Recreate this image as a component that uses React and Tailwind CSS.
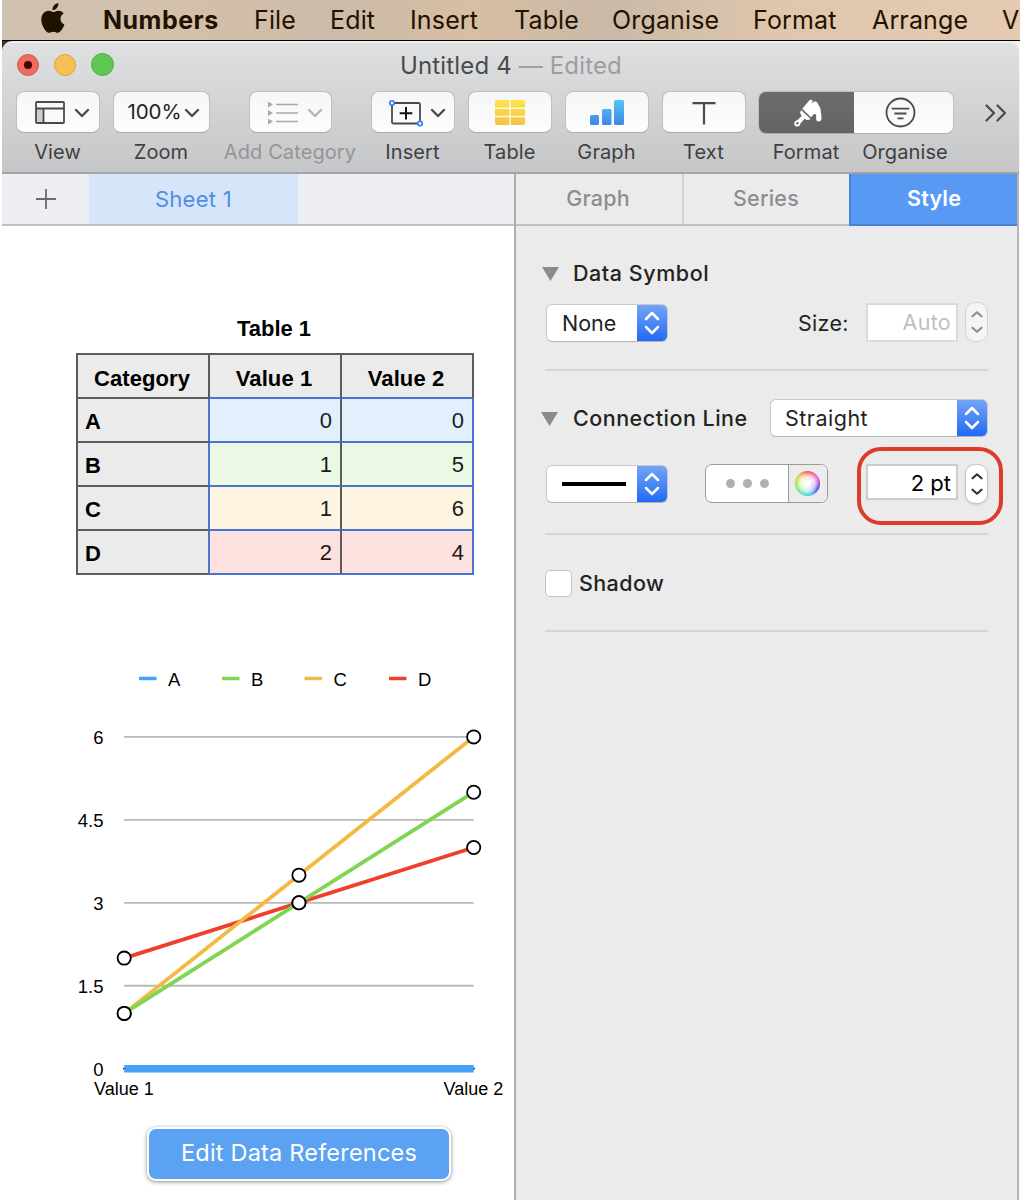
import React from 'react';

const MENUS = [
  { label: 'File',     cls: 'w-[41px] ml-[35px]' },
  { label: 'Edit',     cls: 'w-[45px] ml-[35px]' },
  { label: 'Insert',   cls: 'w-[69px] ml-[35px]' },
  { label: 'Table',    cls: 'w-[63px] ml-[35px]' },
  { label: 'Organise', cls: 'w-[107px] ml-[35px]' },
  { label: 'Format',   cls: 'w-[85px] ml-[34px]' },
  { label: 'Arrange',  cls: 'w-[96px] ml-[34px]' },
  { label: 'V',        cls: 'w-[18px] ml-[34px]' },
];

const ROWS = [
  { name: 'A', values: [0, 0], bg: 'bg-[#e2f0fe]' },
  { name: 'B', values: [1, 5], bg: 'bg-[#ebf8e3]' },
  { name: 'C', values: [1, 6], bg: 'bg-[#fdf4e1]' },
  { name: 'D', values: [2, 4], bg: 'bg-[#fde1de]' },
];

const LEGEND = [
  { label: 'A', color: '#45a1f8', x: 137 },
  { label: 'B', color: '#80d553', x: 220 },
  { label: 'C', color: '#f2ba42', x: 302.5 },
  { label: 'D', color: '#ee402a', x: 387 },
];

const LINES = [
  { color: '#ee402a', from: 2, to: 4 },
  { color: '#f2ba42', from: 1, to: 6 },
  { color: '#80d553', from: 1, to: 5 },
];

const X0 = 122.2;
const X1 = 471.7;
const yOf = (v) => 418.7 - v * 55.3;

function Chevron({ color = '#4a4a4a' }) {
  return (
    <svg width="16" height="10" viewBox="0 0 16 10" fill="none">
      <path d="M2 2l6 6L14 2" stroke={color} strokeWidth="2.400" strokeLinecap="round" strokeLinejoin="round" />
    </svg>
  );
}

function AppleLogo() {
  return (
    <svg width="24" height="30" viewBox="0 0 24 29" preserveAspectRatio="none" fill="#1f1200">
      <path d="M17.4 0c.2 2-.6 3.700-1.700 5-1.100 1.300-2.700 2-4.200 1.900-.2-1.900.6-3.600 1.700-4.800C14.300.9 16 .1 17.400 0z" />
      <path d="M22.600 10.100c-2 1.200-3.100 2.900-3.100 5.100 0 2.500 1.400 4.500 3.900 5.500-.6 1.900-1.600 3.700-2.700 5.200-1.100 1.500-2.200 2.900-4 2.900-1.700 0-2.300-1.100-4.400-1.100s-2.800 1.100-4.400 1.100c-1.700 0-3-1.500-4.200-3.200C1.700 22.900.3 19.600.3 16.300c0-5.100 3.300-8.700 7.300-8.700 1.900 0 3.500 1.200 4.700 1.200 1.100 0 2.900-1.300 5.100-1.300 2.100 0 4 .9 5.200 2.600z" />
    </svg>
  );
}

function ToolItem({ label, className, inset = '', muted, children }) {
  return (
    <div className={`flex flex-col items-center ${className}`}>
      <div className={`flex h-[42px] w-full items-center justify-center rounded-[8px] border border-[#bfc0c2] border-b-[#a9aaac] bg-gradient-to-b from-[#f5f6f6] to-[#fdfdfd] pt-px ${inset}`}>
        {children}
      </div>
      <div className={`mt-[6px] whitespace-nowrap pr-px text-[20px] leading-[26px] tracking-[0.1px] ${muted ? 'text-[#949597]' : 'text-[#3f4042]'}`}>{label}</div>
    </div>
  );
}

function Toolbar() {
  return (
    <div className="flex pl-[14px] pt-[5px]">
      <ToolItem label="View" className="w-[84px]" inset="pl-[9px]">
        <svg width="30" height="23" viewBox="0 0 30 23" fill="none">
          <path d="M1 7.500h7.500V22H1z" fill="#cfcfcf" />
          <rect x="1" y="1" width="28" height="21" rx="1" stroke="#4a4a4a" strokeWidth="1.800" />
          <path d="M1 7.500h28M8.500 7.500V22" stroke="#4a4a4a" strokeWidth="1.800" />
        </svg>
        <span className="ml-[9px] flex"><Chevron /></span>
      </ToolItem>
      <ToolItem label="Zoom" className="ml-[13px] w-[97px]" inset="pl-[5px]">
        <span className="text-[20.500px] tracking-[-0.1px] text-[#222]">100%</span>
        <span className="ml-[3px] flex"><Chevron /></span>
      </ToolItem>
      <ToolItem label="Add Category" className="ml-[39px] w-[83px]" inset="pl-[9px]" muted>
        <svg width="32" height="24" viewBox="0 0 32 24" fill="#a8a8a8">
          <path d="M1 .5l5 3-5 3zM1 9l5 3-5 3zM1 17.500l5 3-5 3z" />
          <path d="M9 3.500h22M9 12h22M9 20.500h22" stroke="#a8a8a8" strokeWidth="1.700" />
        </svg>
        <span className="ml-[8px] flex"><Chevron color="#b4b4b4" /></span>
      </ToolItem>
      <ToolItem label="Insert" className="ml-[39px] w-[84px]" inset="pl-[7px]">
        <svg width="36" height="28" viewBox="0 0 36 28" fill="none">
          <rect x="4" y="4" width="28" height="20.500" rx="1.500" stroke="#4a4a4a" strokeWidth="1.800" />
          <path d="M18 8v12.500M11.700 14.200h12.600" stroke="#111" strokeWidth="2" />
          <circle cx="4" cy="4" r="2.200" fill="#fff" stroke="#3b86f6" strokeWidth="1.800" />
          <circle cx="32" cy="24.500" r="2.200" fill="#fff" stroke="#3b86f6" strokeWidth="1.800" />
        </svg>
        <span className="ml-[6px] flex"><Chevron /></span>
      </ToolItem>
      <ToolItem label="Table" className="ml-[13px] w-[84px]">
        <svg width="30" height="25" viewBox="0 0 30 25">
          <defs>
            <linearGradient id="yellow" x1="0" y1="0" x2="0" y2="1">
              <stop offset="0" stopColor="#fce54d" />
              <stop offset="1" stopColor="#f6c244" />
            </linearGradient>
          </defs>
          <rect width="30" height="25" rx="2" fill="url(#yellow)" />
          <path d="M0 8.300h30M0 16.500h30M15 0v25" stroke="#fdf8e0" strokeWidth="1.500" />
        </svg>
      </ToolItem>
      <ToolItem label="Graph" className="ml-[13px] w-[84px]">
        <svg width="34" height="25" viewBox="0 0 34 25">
          <defs>
            <linearGradient id="blue" x1="0" y1="0" x2="0" y2="25" gradientUnits="userSpaceOnUse">
              <stop offset="0" stopColor="#57c4f3" />
              <stop offset="1" stopColor="#3f86ea" />
            </linearGradient>
          </defs>
          <g fill="url(#blue)">
            <rect y="15" width="9" height="10" rx="1.500" />
            <rect x="12" y="9" width="9.500" height="16" rx="1.500" />
            <rect x="24" y="0" width="10" height="25" rx="1.500" />
          </g>
        </svg>
      </ToolItem>
      <ToolItem label="Text" className="ml-[13px] w-[84px]">
        <svg width="24" height="24" viewBox="0 0 24 24" fill="none">
          <path d="M.5 2.200h23M12 2v21.500" stroke="#4a4a4a" strokeWidth="2.200" />
        </svg>
      </ToolItem>
      <div className="ml-[12px] flex flex-col">
        <div className="flex h-[43px] w-[196px] overflow-hidden rounded-[8px] border border-[#bfc0c2] border-b-[#a9aaac]">
          <div className="flex w-[95px] items-center justify-center bg-gradient-to-b from-[#6b6c6e] to-[#626365]">
            <svg width="30" height="30" viewBox="0 0 30 30" fill="#fff">
              <path d="M10.300 10.700L17.200 2.500c.8-1 2.700-.8 3.600.3l-1.200 2.700 2.800-1.900c1-.5 2.200 0 2.900 1.100l3 5.300 1.300 9.700c.2 4.700-5.400 5-5.500 1.300l.1-3.500c-.3-1.400-1.600-1.700-2.500-1.200L19 19.300z" />
              <path d="M9.300 12.300l8.900 8.200c-.6 1.600-2.200 2-3.800 1.200l-1.700-.9-4.200 4.500c-.2 3-3.200 4.200-5.100 2.600-2-1.800-1.100-5.300 1.900-5.700L9.700 18l-.9-1.500c-.9-1.500-.8-3.100.5-4.200z" />
              <circle cx="5.400" cy="25.200" r="1.200" fill="#656668" />
            </svg>
          </div>
          <div className="flex grow items-center justify-center bg-gradient-to-b from-[#f5f6f6] to-[#fdfdfd] pr-[6px]">
            <svg width="31" height="31" viewBox="0 0 31 31" fill="none" stroke="#4a4a4a" strokeWidth="1.800">
              <circle cx="15.500" cy="15.500" r="14" />
              <path d="M6.700 11.700h17.600M9.500 16.500h12M12.500 21.300h6" />
            </svg>
          </div>
        </div>
        <div className="mt-[5px] flex whitespace-nowrap text-[20px] leading-[26px] tracking-[0.1px] text-[#3f4042]">
          <span className="w-[96px] text-center">Format</span>
          <span className="ml-px flex w-[100px] justify-center">Organise</span>
        </div>
      </div>
      <svg className="ml-[30px] mt-[13px]" width="22" height="18" viewBox="0 0 22 18" fill="none">
        <path d="M1.500 1.500l7.500 7.500-7.500 7.500M12.500 1.500L20 9l-7.500 7.500" stroke="#4a4a4a" strokeWidth="2.200" strokeLinecap="round" strokeLinejoin="round" />
      </svg>
    </div>
  );
}

function DataTable() {
  return (
    <div className="ml-[74px] w-[398px] font-['Liberation_Sans',Arial,sans-serif] text-[22px] leading-[26px] text-black">
      <div className="pr-[2px] text-center font-bold">Table 1</div>
      <div className="mt-[11px] grid grid-cols-[132px_132px_132px] auto-rows-[44px] border-l-2 border-t-2 border-[#5c5c5c]">
        {['Category', 'Value 1', 'Value 2'].map((h, i) => (
          <div key={h} className={`flex items-center justify-center border-b-2 border-r-2 border-r-[#5c5c5c] bg-[#ebebeb] pr-[2px] pt-[6px] font-bold tracking-[0.1px] ${i ? 'border-b-[#4a74d2]' : 'border-b-[#5c5c5c]'}`}>{h}</div>
        ))}
        {ROWS.map((row) => (
          <React.Fragment key={row.name}>
            <div className="flex items-center border-b-2 border-r-2 border-b-[#5c5c5c] border-r-[#4a74d2] bg-[#ebebeb] pl-[7px] pt-[4px] font-bold">{row.name}</div>
            <div className={`flex items-center justify-end border-b-2 border-r-2 border-b-[#4a74d2] border-r-[#5c5c5c] pr-[8px] pt-[2px] text-[#1a1a1a] ${row.bg}`}>{row.values[0]}</div>
            <div className={`flex items-center justify-end border-b-2 border-r-2 border-b-[#4a74d2] border-r-[#4a74d2] pr-[8px] pt-[2px] text-[#1a1a1a] ${row.bg}`}>{row.values[1]}</div>
          </React.Fragment>
        ))}
      </div>
    </div>
  );
}

function LineChart() {
  const dots = LINES.flatMap(({ from, to }) => [
    [X0, from],
    [(X0 + X1) / 2, (from + to) / 2],
    [X1, to],
  ]);
  return (
    <svg className="mt-[75px] block font-['Liberation_Sans',Arial,sans-serif] text-[18px]" width="512" height="450" viewBox="0 0 512 450">
      {LEGEND.map((l) => (
        <g key={l.label}>
          <path d={`M${l.x} 28.500h17.500`} stroke={l.color} strokeWidth="3.500" />
          <text x={l.x + 29} y="36" fontSize="18.500">{l.label}</text>
        </g>
      ))}
      {[6, 4.5, 3, 1.5].map((v) => (
        <path key={v} d={`M${X0} ${yOf(v)}H${X1}`} stroke="#b8b8b8" strokeWidth="1.800" />
      ))}
      {[6, 4.5, 3, 1.5, 0].map((v) => (
        <text key={v} x="101.500" y={yOf(v) + 7.400} fontSize="18.500" textAnchor="end">{v}</text>
      ))}
      <path d={`M${X0 - 1} ${yOf(0)}H${X1 + 1}`} stroke="#000" strokeWidth="1.800" />
      <path d={`M${X0} ${yOf(0)}H${X1}`} stroke="#45a1f8" strokeWidth="7.500" />
      {LINES.map((l) => (
        <path key={l.color} d={`M${X0} ${yOf(l.from)}L${X1} ${yOf(l.to)}`} stroke={l.color} strokeWidth="3.800" />
      ))}
      {dots.map(([x, v], i) => (
        <circle key={i} cx={x} cy={yOf(v)} r="6.600" fill="#fff" stroke="#000" strokeWidth="1.800" />
      ))}
      <text x={X0 - 0.3} y="445" textAnchor="middle">Value 1</text>
      <text x={X1 - 0.3} y="445" textAnchor="middle">Value 2</text>
    </svg>
  );
}

function PopUp({ className, children }) {
  return (
    <div className={`flex h-[38px] overflow-hidden rounded-[6px] border border-[#c9c9c9] border-b-[#b5b5b5] bg-white ${className}`}>
      <div className="flex grow items-center pl-[15px]">{children}</div>
      <div className="flex w-[30px] items-center justify-center bg-gradient-to-b from-[#72a3f5] to-[#1f69f6]">
        <svg width="16" height="24" viewBox="0 0 16 24" fill="none">
          <path d="M2 8l6-6 6 6M2 16l6 6 6-6" stroke="#fff" strokeWidth="2.500" strokeLinecap="round" strokeLinejoin="round" />
        </svg>
      </div>
    </div>
  );
}

function Stepper({ muted }) {
  return (
    <div className={`flex h-[40px] w-[23px] items-center justify-center rounded-[10px] border ${muted ? 'border-[#d3d3d3] bg-[#f4f4f4]' : 'border-[#c6c6c6] bg-white shadow-sm'}`}>
      <svg width="12" height="24" viewBox="0 0 12 24" fill="none">
        <path d="M1.500 6.300L6 2.300l4.500 4M1.500 17.700L6 21.700l4.500-4" stroke={muted ? '#8f8f8f' : '#333'} strokeWidth="2.200" strokeLinecap="round" strokeLinejoin="round" />
      </svg>
    </div>
  );
}

function Disclosure() {
  return (
    <svg className="mt-[2px]" width="17" height="14" viewBox="0 0 17 14" fill="#8b8b8b">
      <path d="M0 0h17L8.500 14z" />
    </svg>
  );
}

function Inspector() {
  return (
    <div className="w-[501px] text-[21.500px] text-[#232323]">
      <div className="flex h-[52px] border-b-2 border-[#bcc0c6] text-[21.500px] font-medium tracking-[0.2px] text-[#8b8e91]">
        <div className="flex w-[168px] items-center justify-center border-r-2 border-[#d0d1d5] pb-[2px] pr-[2px]">Graph</div>
        <div className="flex w-[165px] items-center justify-center pb-[2px] pr-px">Series</div>
        <div className="-mb-[2px] flex grow items-center justify-center border-b-2 border-l-2 border-b-[#4580d2] border-l-[#4580d2] bg-[#5799f3] pb-[2px] font-semibold text-white">Style</div>
      </div>

      <div className="ml-[29px] w-[443px]">
        {/* Data symbol */}
        <div className="-ml-[3px] mt-[30px] flex h-[34px] items-center">
          <Disclosure />
          <span className="ml-[14px] font-medium tracking-[0.55px]">Data Symbol</span>
        </div>
        <div className="mt-[11px] flex h-[42px] items-center">
          <PopUp className="ml-[1px] mt-[2px] w-[122px]">None</PopUp>
          <span className="ml-[130px] mt-[2px] w-[52px] whitespace-nowrap tracking-[0.3px]">Size:</span>
          <div className="ml-[16px] flex h-[39px] w-[92px] shrink-0 items-center justify-end border-2 border-[#dadada] bg-white pr-[5px] tracking-[0.3px] text-[#bfbfbf]">Auto</div>
          <div className="-mt-[1px] ml-[7px]"><Stepper muted /></div>
        </div>
        <div className="mt-[26px] h-[2px] bg-[#d5d5d5]" />

        {/* Connection line */}
        <div className="mt-[28px] flex h-[38px] items-center">
          <div className="-ml-[4px] flex w-[229px] items-center">
            <Disclosure />
            <span className="ml-[15px] whitespace-nowrap font-medium tracking-[0.5px]">Connection Line</span>
          </div>
          <PopUp className="w-[218px]"><span className="-ml-px tracking-[0.5px]">Straight</span></PopUp>
        </div>
        <div className="relative mt-[27px] flex h-[40px] items-start">
          <PopUp className="ml-[1px] mt-px w-[122px]">
            <div className="h-[4px] w-[64px] bg-black" />
          </PopUp>
          <div className="ml-[37px] flex h-[39px] w-[123px] overflow-hidden rounded-[7px] border border-[#9b9b9b] bg-white">
            <div className="flex grow items-center justify-center gap-[8px]">
              <div className="size-[9px] rounded-full bg-[#aeb0b3]" />
              <div className="size-[9px] rounded-full bg-[#aeb0b3]" />
              <div className="size-[9px] rounded-full bg-[#aeb0b3]" />
            </div>
            <div className="flex w-[39px] items-center justify-center border-l border-[#9b9b9b] bg-[#ececec] pr-px">
              <div className="size-[25px] rounded-full bg-[radial-gradient(circle_closest-side,#fff_15%,rgba(255,255,255,0.75)_60%,rgba(255,255,255,0)_100%),conic-gradient(#e8503c,#e84fd0_60deg,#4038d8_115deg,#3fb9f0_165deg,#42e6a0_210deg,#8ee83f_260deg,#e6c53c_310deg,#e8503c)]" />
            </div>
          </div>
          <div className="ml-[38px] flex h-[36px] w-[92px] shrink-0 items-center justify-end border-2 border-[#cbcbcb] bg-white pr-[5px] pt-[2px] text-[22px] text-black">2 pt</div>
          <div className="ml-[7px]"><Stepper /></div>
          {/* callout over the width field */}
          <div className="absolute -right-[15px] -top-[17px] h-[78px] w-[146px] rounded-[24px] border-4 border-[#dc3d2a]" />
        </div>
        <div className="mt-[29px] h-[2px] bg-[#d5d5d5]" />

        {/* Shadow */}
        <div className="mt-[35px] flex h-[27px] items-center">
          <div className="size-[27px] rounded-[5px] border border-[#c2c2c2] bg-white" />
          <span className="ml-[7px] font-medium tracking-[0.4px]">Shadow</span>
        </div>
        <div className="mt-[33px] h-[2px] bg-[#d5d5d5]" />
      </div>
    </div>
  );
}

export default function App() {
  return (
    <div className="h-[1200px] w-[1020px] overflow-hidden bg-white pl-[2px] font-['Inter',sans-serif]">
      {/* Menu bar */}
      <div className="flex h-[41px] items-center overflow-hidden whitespace-nowrap border-b border-black bg-[linear-gradient(90deg,#cfc1ae_0%,#d3c0ab_18%,#cbbba8_34%,#d8bea2_46%,#c9b9a8_60%,#dfc6ac_76%,#e4cab0_100%)] pt-px text-[25px] tracking-[0.15px] text-[#1f1200]">
        <div className="-mt-[5px] ml-[39px]"><AppleLogo /></div>
        <div className="ml-[38px] w-[117px] font-bold tracking-[0.5px]">Numbers</div>
        {MENUS.map((m) => (
          <div key={m.label} className={`shrink-0 ${m.cls}`}>{m.label}</div>
        ))}
      </div>

      {/* Window */}
      <div className="bg-[linear-gradient(90deg,#3b3222,#8d8a84_30%,#c9c9c9_60%,#f4f4f4)]">
        <div className="h-[133px] w-[1017px] rounded-t-[10px] border-b-2 border-t-2 border-b-[#a3a4a6] border-t-[#eceded] bg-gradient-to-b from-[#dfe0e2] to-[#c5c6c8]">
          <div className="flex h-[43px] items-center pl-[15px]">
            <div className="flex size-[22px] items-center justify-center rounded-full border border-[#d8584f] bg-[#ed6b60]">
              <div className="size-[8px] rounded-full bg-[#450806]" />
            </div>
            <div className="ml-[15px] size-[22px] rounded-full border border-[#dea23d] bg-[#f5c04f]" />
            <div className="ml-[15px] size-[23px] rounded-full border border-[#4fae3f] bg-[#61c554]" />
            <div className="ml-[286px] mt-[2px] whitespace-nowrap text-[24px] tracking-[0.15px] text-[#4a4b4d]">
              Untitled 4 <span className="text-[#9d9ea0]">— Edited</span>
            </div>
          </div>
          <Toolbar />
        </div>
      </div>

      <div className="flex h-[1026px] w-[1017px] bg-[#ebebeb]">
        <div className="h-full w-[514px] border-r-2 border-[#aeaeb0] bg-white">
          <div className="flex h-[52px] border-b-2 border-[#bcc0cc] bg-[#eeeff4]">
            <div className="flex w-[87px] items-center justify-center">
              <svg width="20" height="20" viewBox="0 0 20 20">
                <path d="M0 10h20M10 0v20" stroke="#6a6a6a" strokeWidth="1.800" />
              </svg>
            </div>
            <div className="flex w-[209px] items-center justify-center bg-[#d7e5f8] text-[22px] tracking-[0.3px] text-[#508ee6]">Sheet 1</div>
          </div>
          <div className="h-[90px]" />
          <DataTable />
          <LineChart />
          <div className="ml-[145px] mt-[27px] flex h-[54px] w-[304px] items-center justify-center rounded-[9px] border-2 border-white bg-[#5ca2f2] pb-[2px] text-[23.500px] tracking-[0.2px] text-white shadow-[0_1px_4px_rgba(0,0,0,0.45)]">
            Edit Data References
          </div>
        </div>
        <div className="border-r-2 border-[#b5b5b5]"><Inspector /></div>
      </div>
    </div>
  );
}
